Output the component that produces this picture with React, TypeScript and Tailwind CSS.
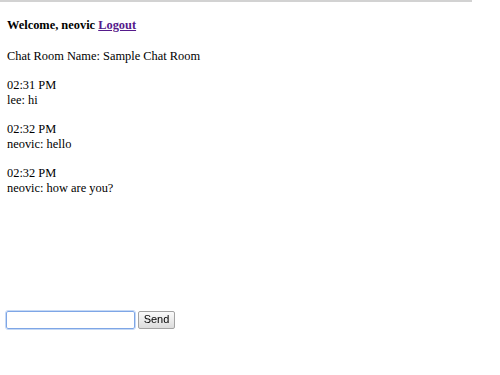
import React from 'react';

const messages = [
  { time: '02:31 PM', user: 'lee', text: 'hi' },
  { time: '02:32 PM', user: 'neovic', text: 'hello' },
  { time: '02:32 PM', user: 'neovic', text: 'how are you?' },
];

export default function App() {
  return (
    <div className="w-[500px] h-[375px] bg-white text-black font-['Liberation_Serif','Times_New_Roman',serif] text-[12.4px] leading-[14.7px]">
      <div className="w-[472px] border-t-2 border-[#d2d2d2]" />
      <div className="px-[7px] pt-[15.5px]">
        <div className="font-bold">
          Welcome, neovic{' '}
          <a href="#" className="text-[#551a8b] underline">
            Logout
          </a>
        </div>
        <div className="mt-[17px]">Chat Room Name: Sample Chat Room</div>

        <div className="mt-[14px] h-[233px] flex flex-col gap-[14.7px]">
          {messages.map((m, i) => (
            <div key={i}>
              <div>{m.time}</div>
              <div>
                {m.user}: {m.text}
              </div>
            </div>
          ))}
        </div>

        <div className="flex items-center gap-[3px] -ml-[1px]">
          <input
            type="text"
            autoFocus
            className="w-[129px] h-[18px] border border-[#7ea6e6] rounded-[2px] outline outline-1 outline-[#c6d9f5] px-[2px] text-[12px] font-['Liberation_Sans',Arial,sans-serif] caret-black"
          />
          <button className="w-[37px] h-[18px] border border-[#a3a3a3] rounded-[2px] bg-gradient-to-b from-[#fbfbfb] to-[#dcdcdc] text-[11px] leading-none font-['Liberation_Sans',Arial,sans-serif] text-black">
            Send
          </button>
        </div>
      </div>
    </div>
  );
}
